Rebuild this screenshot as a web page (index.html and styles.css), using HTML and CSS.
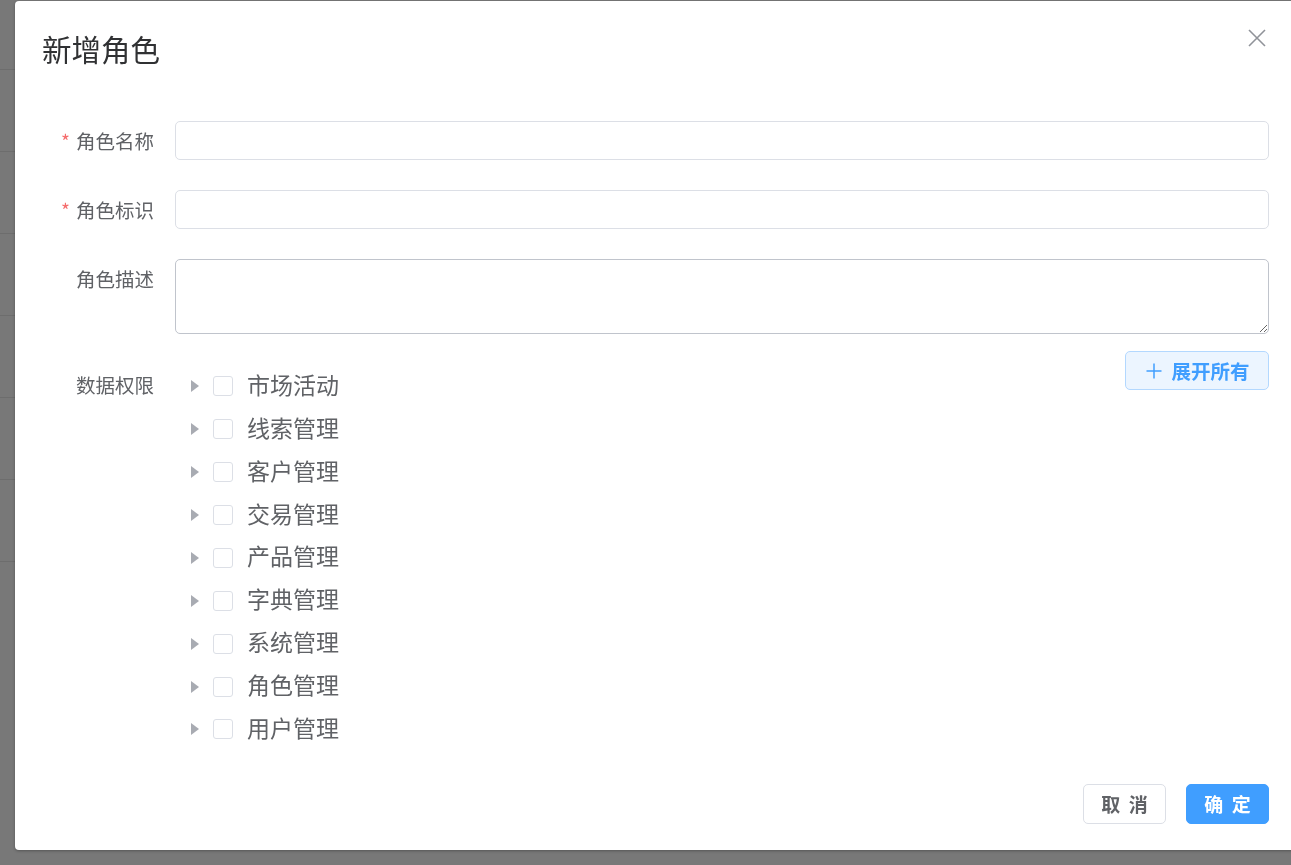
FILE: index.html
```html
<!DOCTYPE html>
<html lang="zh-CN">
<head>
<meta charset="utf-8">
<title>新增角色</title>
<link rel="stylesheet" href="styles.css">
</head>
<body>
<div class="backdrop">
  <div class="bg-row first"></div>
  <div class="bg-row"></div>
  <div class="bg-row"></div>
  <div class="bg-row"></div>
  <div class="bg-row"></div>
  <div class="bg-row"></div>
  <div class="bg-row"></div>
</div>

<div class="dialog">
  <div class="dialog-header">
    <span class="dialog-title">新增角色</span>
    <button class="close-btn" aria-label="关闭">
      <svg width="18" height="18" viewBox="0 0 18 18"><path d="M1 1 L17 17 M17 1 L1 17" stroke="#909399" stroke-width="1.6" fill="none"/></svg>
    </button>
  </div>

  <form class="dialog-body">
    <div class="form-item">
      <label class="form-label"><span class="req">*</span>角色名称</label>
      <div class="form-control"><input class="input" type="text"></div>
    </div>
    <div class="form-item">
      <label class="form-label"><span class="req">*</span>角色标识</label>
      <div class="form-control"><input class="input" type="text"></div>
    </div>
    <div class="form-item desc">
      <label class="form-label">角色描述</label>
      <div class="form-control"><textarea class="textarea"></textarea></div>
    </div>
    <div class="form-item perm">
      <label class="form-label perm-label">数据权限</label>
      <div class="form-control perm-control">
        <div class="tree">
          <div class="tree-node"><span class="caret"></span><span class="checkbox"></span><span class="node-label">市场活动</span></div>
          <div class="tree-node"><span class="caret"></span><span class="checkbox"></span><span class="node-label">线索管理</span></div>
          <div class="tree-node"><span class="caret"></span><span class="checkbox"></span><span class="node-label">客户管理</span></div>
          <div class="tree-node"><span class="caret"></span><span class="checkbox"></span><span class="node-label">交易管理</span></div>
          <div class="tree-node"><span class="caret"></span><span class="checkbox"></span><span class="node-label">产品管理</span></div>
          <div class="tree-node"><span class="caret"></span><span class="checkbox"></span><span class="node-label">字典管理</span></div>
          <div class="tree-node"><span class="caret"></span><span class="checkbox"></span><span class="node-label">系统管理</span></div>
          <div class="tree-node"><span class="caret"></span><span class="checkbox"></span><span class="node-label">角色管理</span></div>
          <div class="tree-node"><span class="caret"></span><span class="checkbox"></span><span class="node-label">用户管理</span></div>
        </div>
        <button type="button" class="expand-btn">
          <svg width="16" height="16" viewBox="0 0 16 16"><path d="M8 0.5 V15.5 M0.5 8 H15.5" stroke="#409eff" stroke-width="1.5" fill="none"/></svg>
          <span>展开所有</span>
        </button>
      </div>
    </div>
  </form>

  <div class="dialog-footer">
    <button class="btn btn-default">取 消</button>
    <button class="btn btn-primary">确 定</button>
  </div>
</div>
</body>
</html>
```

FILE: styles.css
```css
* { box-sizing: border-box; }

html, body {
  margin: 0;
  padding: 0;
  height: 100%;
  overflow: hidden;
}

body {
  background: #787878;
  font-family: "Noto Sans CJK SC", "Noto Sans", sans-serif;
}

.backdrop {
  display: flex;
  flex-direction: column;
}

.bg-row {
  height: 82px;
  border-bottom: 1px solid #6d6d6d;
}

.bg-row.first {
  height: 70px;
}

.dialog {
  position: fixed;
  top: 1px;
  left: 15px;
  width: 1281px;
  background: #fff;
  border-radius: 4px;
  padding: 0 27px 26px;
  box-shadow: 0 1px 3px rgba(0, 0, 0, 0.3);
}

.dialog-header {
  display: flex;
  justify-content: space-between;
  align-items: flex-start;
  padding-top: 27px;
  height: 120px;
}

.dialog-title {
  font-size: 29.5px;
  line-height: 40px;
  color: #303133;
}

.close-btn {
  border: 0;
  background: none;
  padding: 0;
  margin-top: 1px;
  margin-right: 3px;
  width: 18px;
  height: 18px;
  display: flex;
  cursor: pointer;
}

.dialog-body {
  display: flex;
  flex-direction: column;
  gap: 30px;
  margin: 0;
}

.form-item {
  display: flex;
  align-items: flex-start;
}

.form-item.perm {
  margin-top: -13px;
}

.form-label {
  width: 133px;
  flex: none;
  text-align: right;
  padding-right: 21px;
  font-size: 19.5px;
  line-height: 39px;
  color: #606266;
}

.req {
  color: #f56c6c;
  margin-right: 6px;
  font-size: 19px;
}

.form-control {
  flex: 1;
  min-width: 0;
}

.input {
  display: block;
  width: 100%;
  height: 39px;
  border: 1px solid #dcdfe6;
  border-radius: 5px;
  outline: none;
  font: inherit;
  padding: 0 15px;
}

.textarea {
  display: block;
  width: 100%;
  height: 75px;
  border: 1px solid #c0c4cc;
  border-radius: 5px;
  outline: none;
  font: inherit;
  padding: 6px 15px;
  resize: vertical;
}

.perm-label {
  padding-top: 14px;
  line-height: 40px;
}

.perm-control {
  display: flex;
  align-items: flex-start;
}

.tree {
  flex: 1;
  padding-top: 14px;
}

.tree-node {
  height: 42.875px;
  display: flex;
  align-items: center;
  padding-left: 16px;
}

.caret {
  width: 0;
  height: 0;
  border-top: 6px solid transparent;
  border-bottom: 6px solid transparent;
  border-left: 8px solid #a8abb2;
  margin-right: 14px;
}

.checkbox {
  width: 20px;
  height: 20px;
  border: 1px solid #dcdfe6;
  border-radius: 3px;
  background: #fff;
  margin-right: 14px;
}

.node-label {
  font-size: 23px;
  color: #606266;
  line-height: 1;
  margin-bottom: 4px;
}

.expand-btn {
  flex: none;
  width: 144px;
  height: 39px;
  border: 1px solid #b3d8ff;
  background: #ecf5ff;
  color: #409eff;
  border-radius: 5px;
  font-family: inherit;
  font-size: 19.5px;
  font-weight: 600;
  display: flex;
  align-items: center;
  justify-content: center;
  gap: 9px;
  padding: 0 0 0 2px;
  cursor: pointer;
}

.dialog-footer {
  display: flex;
  justify-content: flex-end;
  gap: 20px;
  margin-top: 33px;
}

.btn {
  width: 83px;
  height: 40px;
  border-radius: 5px;
  font-family: inherit;
  font-size: 19px;
  font-weight: 700;
  letter-spacing: 2px;
  padding: 0 0 0 2px;
  cursor: pointer;
}

.btn-default {
  background: #fff;
  border: 1px solid #dcdfe6;
  color: #606266;
}

.btn-primary {
  background: #409eff;
  border: 1px solid #409eff;
  color: #fff;
}
```
